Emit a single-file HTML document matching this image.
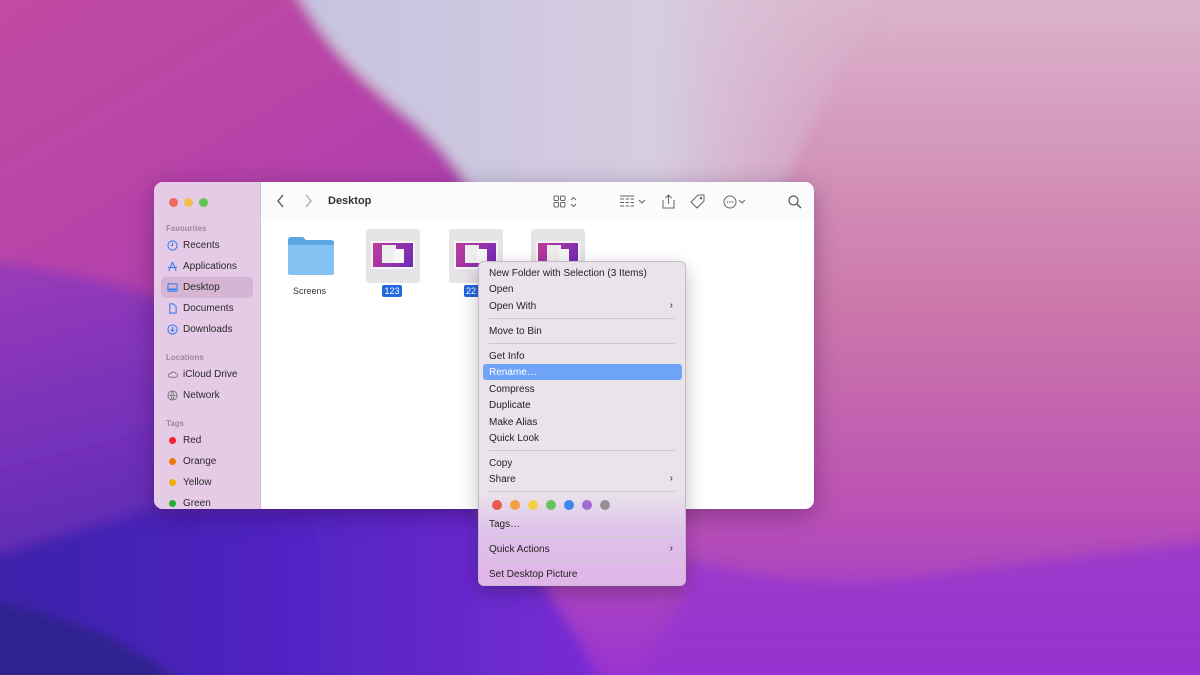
<!DOCTYPE html>
<html><head><meta charset="utf-8"><style>
*{margin:0;padding:0;box-sizing:border-box}
body{width:1200px;height:675px;overflow:hidden;position:relative;font-family:"Liberation Sans",sans-serif;background:#7a35b5}
.abs{position:absolute}
.win{position:absolute;left:154px;top:182px;width:660px;height:327px;border-radius:9px;overflow:hidden;background:#fff;box-shadow:0 6px 24px rgba(40,0,60,.35)}
.side{position:absolute;left:0;top:0;width:107px;height:327px;background:#e6cbe6;border-right:1px solid #d6bcd6}
.side .h{position:absolute;left:12px;font-size:8px;color:#9c8a9c;font-weight:bold}
.side .i{position:absolute;left:29px;font-size:10px;color:#2a2a2a}
.side .ic{position:absolute;left:13px;width:11px;height:11px}
.dot{position:absolute;left:15px;width:7px;height:7px;border-radius:50%}
.tl{position:absolute;top:16px;width:9px;height:9px;border-radius:50%}
.menu{position:absolute;left:478px;top:261px;width:208px;height:325px;border-radius:6px;background:linear-gradient(#e9e4ea 0,#e9e4ea 230px,#dfc2ea 270px,#e0b4e8 325px);border:1px solid #c9b8cc;box-shadow:0 6px 18px rgba(0,0,0,.25);font-size:10px;color:#222}
.menu .t{position:absolute;left:10px}
.menu .s{position:absolute;left:10px;right:10px;height:1px;background:#cfc6d0}
.menu .ar{position:absolute;right:12px;font-size:10px}
.cd{position:absolute;top:238px;width:10px;height:10px;border-radius:50%}
.th{position:absolute;width:44px;height:28px;background:linear-gradient(120deg,#c03c98,#6d2ab8);border:2px solid #f4f4f4}
.th i{position:absolute;left:9px;top:2px;width:14px;height:18px;background:#eee}
.th b{position:absolute;left:21px;top:6px;width:10px;height:14px;background:#f6f6f6}
</style></head><body>
<svg class="abs" style="left:0;top:0" width="1200" height="675" viewBox="0 0 1200 675">
<defs>
<linearGradient id="sky" x1="0" y1="0" x2="1" y2="0"><stop offset="0" stop-color="#c4c2e0"/><stop offset=".6" stop-color="#d6cde0"/><stop offset="1" stop-color="#dcbad2" stop-opacity="0"/></linearGradient>
<linearGradient id="pl" x1="0" y1="0" x2="0.4" y2="1"><stop offset="0" stop-color="#c24ca0"/><stop offset=".6" stop-color="#b03eae"/><stop offset="1" stop-color="#9a38b8"/></linearGradient>
<linearGradient id="lo" x1="0" y1="0" x2="0.3" y2="1"><stop offset="0" stop-color="#9a3cb8"/><stop offset=".5" stop-color="#6e2eba"/><stop offset="1" stop-color="#3c28a4"/></linearGradient>
<linearGradient id="rt" x1="0" y1="0" x2="0" y2="1"><stop offset="0" stop-color="#dbb4cc"/><stop offset=".45" stop-color="#cc78aa"/><stop offset=".75" stop-color="#bb52b4"/><stop offset="1" stop-color="#9a34d0"/></linearGradient>
<linearGradient id="bot" x1="0" y1="0" x2="1" y2="0"><stop offset="0" stop-color="#3a24a8"/><stop offset=".5" stop-color="#5224c4"/><stop offset="1" stop-color="#7a2cd4"/></linearGradient>
<filter id="bl"><feGaussianBlur stdDeviation="6"/></filter>
</defs>
<rect width="1200" height="675" fill="url(#rt)"/>
<g filter="url(#bl)">
<path d="M290 -20 L900 -20 Q800 120 760 260 L470 260 Q440 150 380 90 Q320 40 290 -20Z" fill="url(#sky)"/>
<path d="M-20 -20 L290 -20 Q330 60 400 110 Q450 150 470 190 L480 700 L-20 700Z" fill="url(#pl)"/>
<path d="M-20 260 Q150 280 260 340 Q400 420 480 480 L480 700 L-20 700Z" fill="url(#lo)"/>
<path d="M150 509 L470 509 Q540 560 610 700 L-20 700 L-20 560Z" fill="url(#bot)"/>
<path d="M-20 600 Q120 620 200 700 L-20 700Z" fill="#2e248e"/>
<path d="M686 560 Q800 590 900 580 Q1050 560 1220 540 L1220 700 L640 700 Q660 620 686 600Z" fill="#9232d0" opacity=".7"/>
</g>
</svg>

<div class="win">
 <div class="side">
  <div class="tl" style="left:15px;background:#ed6a5e"></div>
  <div class="tl" style="left:30px;background:#f5bf4f"></div>
  <div class="tl" style="left:45px;background:#61c554"></div>
  <div class="h" style="top:42px">Favourites</div>
  <svg class="ic" style="top:58px" viewBox="0 0 12 12"><circle cx="6" cy="6" r="5" fill="none" stroke="#3d7ef0" stroke-width="1.2"/><path d="M6 3V6H4" stroke="#3d7ef0" fill="none" stroke-width="1.2"/></svg>
  <div class="i" style="top:58px">Recents</div>
  <svg class="ic" style="top:79px" viewBox="0 0 12 12"><path d="M6 1L2 11M6 1L10 11M1 7H11" stroke="#3d7ef0" fill="none" stroke-width="1.3"/></svg>
  <div class="i" style="top:79px">Applications</div>
  <div class="abs" style="left:7px;top:95px;width:92px;height:21px;border-radius:5px;background:#d5b5d3"></div>
  <svg class="ic" style="top:100px" viewBox="0 0 12 12"><rect x="1" y="2" width="10" height="8" rx="1" fill="none" stroke="#3d7ef0" stroke-width="1.2"/><rect x="2" y="7" width="8" height="2" fill="#3d7ef0"/></svg>
  <div class="i" style="top:100px">Desktop</div>
  <svg class="ic" style="top:121px" viewBox="0 0 12 12"><path d="M3 1H7L10 4V11H3Z" fill="none" stroke="#3d7ef0" stroke-width="1.2"/></svg>
  <div class="i" style="top:121px">Documents</div>
  <svg class="ic" style="top:142px" viewBox="0 0 12 12"><circle cx="6" cy="6" r="5" fill="none" stroke="#3d7ef0" stroke-width="1.2"/><path d="M6 3V8M4 6L6 8L8 6" stroke="#3d7ef0" fill="none" stroke-width="1.2"/></svg>
  <div class="i" style="top:142px">Downloads</div>
  <div class="h" style="top:171px">Locations</div>
  <svg class="ic" style="top:187px" viewBox="0 0 12 12"><path d="M3 9H9.5A2 2 0 0 0 9.5 5A3 3 0 0 0 4 5A2 2 0 0 0 3 9Z" fill="none" stroke="#777" stroke-width="1"/></svg>
  <div class="i" style="top:187px">iCloud Drive</div>
  <svg class="ic" style="top:208px" viewBox="0 0 12 12"><circle cx="6" cy="6" r="5" fill="none" stroke="#777" stroke-width="1"/><path d="M1 6H11M6 1Q3 6 6 11Q9 6 6 1" fill="none" stroke="#777" stroke-width=".9"/></svg>
  <div class="i" style="top:208px">Network</div>
  <div class="h" style="top:237px">Tags</div>
  <div class="dot" style="top:255px;background:#f0202e"></div><div class="i" style="top:253px">Red</div>
  <div class="dot" style="top:276px;background:#e97610"></div><div class="i" style="top:274px">Orange</div>
  <div class="dot" style="top:297px;background:#edb10a"></div><div class="i" style="top:295px">Yellow</div>
  <div class="dot" style="top:318px;background:#22b034"></div><div class="i" style="top:316px">Green</div>
 </div>
 <div class="abs" style="left:108px;top:0;width:552px;height:38px;background:#fcfbfc"></div>
 <svg class="abs" style="left:123px;top:12px" width="40" height="14" viewBox="0 0 40 14"><path d="M6 1L1 7L6 13" fill="none" stroke="#555" stroke-width="1.3"/><path d="M29 1L34 7L29 13" fill="none" stroke="#aaa" stroke-width="1.3"/></svg>
 <div class="abs" style="left:174px;top:13px;font-size:11px;font-weight:bold;color:#333">Desktop</div>
 <svg class="abs" style="left:398px;top:12px" width="200" height="16" viewBox="0 0 200 16">
  <g fill="none" stroke="#666" stroke-width="1"><rect x="2" y="2" width="4.5" height="4.5" rx="1"/><rect x="8.5" y="2" width="4.5" height="4.5" rx="1"/><rect x="2" y="8.5" width="4.5" height="4.5" rx="1"/><rect x="8.5" y="8.5" width="4.5" height="4.5" rx="1"/>
  <path d="M19 6L21.5 3.5L24 6M19 10L21.5 12.5L24 10"/>
  <path d="M68 2H82M68 5H72M73.5 5H77M78.5 5H82M68 8.5H72M73.5 8.5H77M78.5 8.5H82M68 12H72M73.5 12H77M78.5 12H82"/><path d="M87 6L90 9L93 6"/>
  <path d="M111 6V14H122V6M116.5 10V1M113.5 4L116.5 1L119.5 4"/>
  <path d="M139 8L146 1H152V7L145 14Z"/><circle cx="149" cy="4" r=".8"/>
  <circle cx="178" cy="8" r="6"/><path d="M187 6L190 9L193 6"/>
  </g><g fill="#666"><circle cx="175.5" cy="8" r=".8"/><circle cx="178" cy="8" r=".8"/><circle cx="180.5" cy="8" r=".8"/></g>
 </svg>
 <svg class="abs" style="left:633px;top:12px" width="16" height="16" viewBox="0 0 16 16"><circle cx="6.5" cy="6.5" r="4.5" fill="none" stroke="#555" stroke-width="1.2"/><path d="M10 10L14 14" stroke="#555" stroke-width="1.3"/></svg>
 <svg class="abs" style="left:133px;top:54px" width="48" height="40" viewBox="0 0 48 40"><path d="M1 4Q1 1 4 1H16L19 4H44Q47 4 47 7V37Q47 39 44 39H4Q1 39 1 37Z" fill="#5aa7e3"/><path d="M1 9H47V36Q47 39 44 39H4Q1 39 1 36Z" fill="#84c2f3"/></svg>
 <div class="abs" style="left:139px;top:104px;font-size:9px;color:#333">Screens</div>
 <div class="abs" style="left:212px;top:47px;width:54px;height:54px;background:#e6e4e6;border-radius:3px"></div>
 <div class="th" style="left:217px;top:59px"><i></i><b></b></div>
 <div class="abs" style="left:228px;top:103px;width:20px;height:12px;background:#2467e0;border-radius:2px;color:#fff;font-size:9px;text-align:center;line-height:12px">123</div>
 <div class="abs" style="left:295px;top:47px;width:54px;height:54px;background:#e6e4e6;border-radius:3px"></div>
 <div class="th" style="left:300px;top:59px"><i></i><b></b></div>
 <div class="abs" style="left:310px;top:103px;width:20px;height:12px;background:#2467e0;border-radius:2px;color:#fff;font-size:9px;line-height:12px;padding-left:2px">22</div>
 <div class="abs" style="left:377px;top:47px;width:54px;height:54px;background:#e6e4e6;border-radius:3px"></div>
 <div class="th" style="left:382px;top:59px"><i></i><b></b></div>
</div>

<div class="menu">
 <div class="t" style="top:6px">New Folder with Selection (3 Items)</div>
 <div class="t" style="top:22px">Open</div>
 <div class="t" style="top:39px">Open With</div><div class="ar" style="top:38px">›</div>
 <div class="s" style="top:56px"></div>
 <div class="t" style="top:64px">Move to Bin</div>
 <div class="s" style="top:81px"></div>
 <div class="t" style="top:89px">Get Info</div>
 <div class="abs" style="left:4px;top:102px;width:199px;height:16px;background:#6ea3f7;border-radius:3px"></div>
 <div class="t" style="top:105px;color:#fff">Rename…</div>
 <div class="t" style="top:122px">Compress</div>
 <div class="t" style="top:138px">Duplicate</div>
 <div class="t" style="top:155px">Make Alias</div>
 <div class="t" style="top:171px">Quick Look</div>
 <div class="s" style="top:188px"></div>
 <div class="t" style="top:196px">Copy</div>
 <div class="t" style="top:212px">Share</div><div class="ar" style="top:211px">›</div>
 <div class="s" style="top:229px"></div>
 <div class="cd" style="left:13px;background:#e85b4e"></div>
 <div class="cd" style="left:31px;background:#f0a040"></div>
 <div class="cd" style="left:49px;background:#f3cf48"></div>
 <div class="cd" style="left:67px;background:#62c55e"></div>
 <div class="cd" style="left:85px;background:#3f86ee"></div>
 <div class="cd" style="left:103px;background:#a56ad0"></div>
 <div class="cd" style="left:121px;background:#959095"></div>
 <div class="t" style="top:257px">Tags…</div>
 <div class="s" style="top:274px"></div>
 <div class="t" style="top:282px">Quick Actions</div><div class="ar" style="top:281px">›</div>
 <div class="s" style="top:299px"></div>
 <div class="t" style="top:307px">Set Desktop Picture</div>
</div>
</body></html>
